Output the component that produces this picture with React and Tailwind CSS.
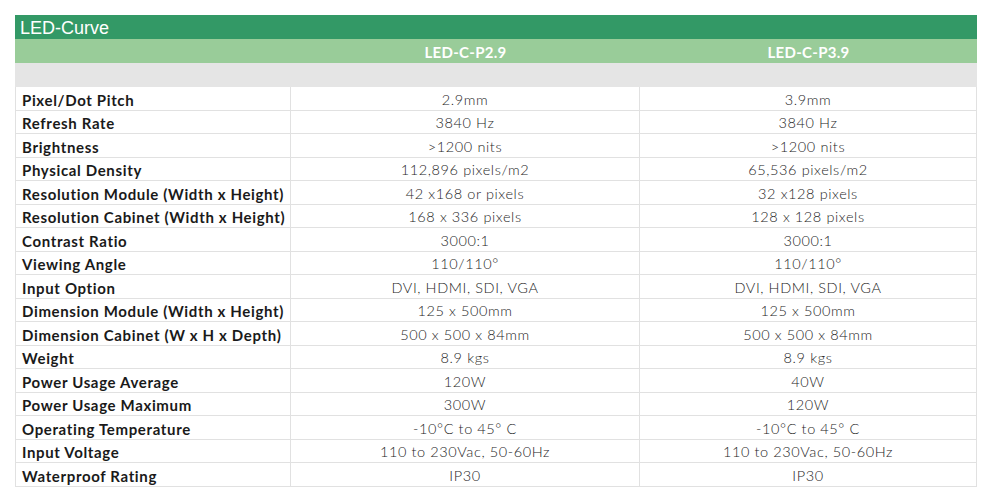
import React from 'react';

const specs = [
	['Pixel/Dot Pitch', '2.9mm', '3.9mm'],
	['Refresh Rate', '3840 Hz', '3840 Hz'],
	['Brightness', '>1200 nits', '>1200 nits'],
	['Physical Density', '112,896 pixels/m2', '65,536 pixels/m2'],
	['Resolution Module (Width x Height)', '42 x168 or pixels', '32 x128 pixels'],
	['Resolution Cabinet (Width x Height)', '168 x 336 pixels', '128 x 128 pixels'],
	['Contrast Ratio', '3000:1', '3000:1'],
	['Viewing Angle', '110/110°', '110/110°'],
	['Input Option', 'DVI, HDMI, SDI, VGA', 'DVI, HDMI, SDI, VGA'],
	['Dimension Module (Width x Height)', '125 x 500mm', '125 x 500mm'],
	['Dimension Cabinet (W x H x Depth)', '500 x 500 x 84mm', '500 x 500 x 84mm'],
	['Weight', '8.9 kgs', '8.9 kgs'],
	['Power Usage Average', '120W', '40W'],
	['Power Usage Maximum', '300W', '120W'],
	['Operating Temperature', '-10°C to 45° C', '-10°C to 45° C'],
	['Input Voltage', '110 to 230Vac, 50-60Hz', '110 to 230Vac, 50-60Hz'],
	['Waterproof Rating', 'IP30', 'IP30']
];

export default function App() {
	return (
		<div className="w-[1003px] h-[503px] bg-white pt-[15px] pl-[15px]">
			<div className="w-[962px]">
				{/* title bar */}
				<div className="h-[24px] bg-[#339966] flex items-center pl-[5px] pt-[2px] text-white text-[18px] font-['Liberation_Sans',sans-serif] leading-none">
					LED-Curve
				</div>
				{/* model header */}
				<div className="h-[24px] bg-[#99cc99] flex items-center pt-[2px] text-white font-['Lato',sans-serif] font-bold text-[15px] tracking-[0.3px]">
					<div className="w-[276px]" />
					<div className="w-[349px] text-center">LED-C-P2.9</div>
					<div className="flex-1 text-center">LED-C-P3.9</div>
				</div>
				<div className="h-[24px] bg-[#e5e5e5]" />
				{/* spec rows */}
				<div className="border-l border-r border-[#e1e1e1]">
					{specs.map(([label, a, b]) => (
						<div key={label} className="h-[23.5px] flex border-b border-[#e1e1e1] items-center">
							<div className="w-[275px] h-full flex items-center pl-[6px] pt-[3px] font-['Lato',sans-serif] font-bold text-[15px] text-[#1a1a1a] tracking-[0.65px] border-r border-[#e1e1e1] whitespace-nowrap">
								{label}
							</div>
							<div className="w-[349px] h-full flex items-center justify-center pt-[3px] font-['Lato',sans-serif] font-light text-[14.5px] text-[#262626] tracking-[0.6px] border-r border-[#e1e1e1]">
								{a}
							</div>
							<div className="flex-1 h-full flex items-center justify-center pt-[3px] font-['Lato',sans-serif] font-light text-[14.5px] text-[#262626] tracking-[0.6px]">
								{b}
							</div>
						</div>
					))}
				</div>
			</div>
		</div>
	);
}
